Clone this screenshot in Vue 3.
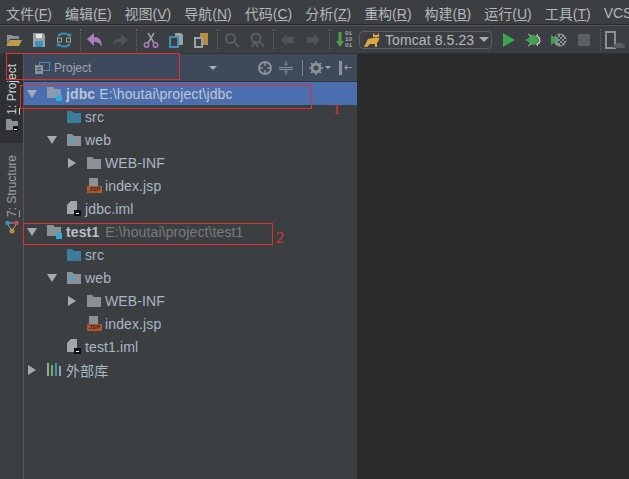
<script setup>
const menus = [['文件','F'],['编辑','E'],['视图','V'],['导航','N'],['代码','C'],['分析','Z'],['重构','R'],['构建','B'],['运行','U'],['工具','T']]
</script>

<template>
  <div class="ide">
    <nav class="menubar">
      <span v-for="m in menus" :key="m[0]" class="menu">{{ m[0] }}(<u>{{ m[1] }}</u>)</span>
      <span class="menu">VCS</span>
    </nav>
    <div class="toolbar">
      <svg viewBox="0 0 16 16"><path d="M1 3h5l1 1h6v3H4l-3 6z" fill="#8a9297"/><path d="M4 8h12l-3 6H0z" fill="#c49a4a"/></svg>
      <svg viewBox="0 0 16 16"><path d="M2 1h10l2 2v12H2z" fill="#9aa2a6"/><rect x="5" y="2" width="6" height="4" fill="#e4e6e7"/><rect x="4" y="9" width="8" height="6" fill="#3d8fbf"/></svg>
      <svg viewBox="0 0 16 16" fill="none"><path d="M2 4a7 5 0 0 1 11-1" stroke="#3f8fb5" stroke-width="2"/><path d="M14 12a7 5 0 0 1-11 1" stroke="#3f8fb5" stroke-width="2"/><path d="m11 4 4 1V1zM5 12l-4-1v4z" fill="#3f8fb5"/><rect x="1.500" y="6" width="4" height="4" stroke="#9aa2a6"/><rect x="10.500" y="6" width="4" height="4" stroke="#9aa2a6"/></svg>
      <i class="sep"></i>
      <svg viewBox="0 0 16 16"><path d="M7 1v4c5 0 8 3 8 10-2-4-4-5-8-5v4L0 7z" fill="#a77fc0"/></svg>
      <svg viewBox="0 0 16 16"><path d="M9 2v4C4 6 1 9 1 14c2-3 4-4 8-4v4l7-6z" fill="#505456"/></svg>
      <i class="sep"></i>
      <svg viewBox="0 0 16 16" fill="none" stroke="#a77fc0" stroke-width="1.500"><circle cx="3.500" cy="13" r="2.200"/><circle cx="12.500" cy="13" r="2.200"/><path d="M5 11 11 1M11 11 5 1" stroke="#9aa2a6"/></svg>
      <svg viewBox="0 0 16 16"><path d="M7 1h6l2 2v10H7z" fill="#9aa2a6"/><rect x="2" y="5" width="8" height="10" fill="#3c3f41" stroke="#3f8fb5" stroke-width="2"/></svg>
      <svg viewBox="0 0 16 16"><rect x="7" y="1" width="8" height="12" fill="#b98d3f"/><rect x="2" y="6" width="7" height="9" fill="#3c3f41" stroke="#9aa2a6" stroke-width="2"/></svg>
      <i class="sep"></i>
      <svg viewBox="0 0 16 16" fill="none" stroke="#5a5e60" stroke-width="2"><circle cx="6.500" cy="6.500" r="4.500"/><path d="m10 10 5 5"/></svg>
      <svg viewBox="0 0 16 16" fill="none" stroke="#5a5e60" stroke-width="2"><circle cx="7" cy="6" r="4.500"/><path d="m11 10 4 5M3 15l3-5 3 5"/></svg>
      <i class="sep"></i>
      <svg viewBox="0 0 16 16"><path d="M7 2v3h7v6H7v3L1 8z" fill="#505456"/></svg>
      <svg viewBox="0 0 16 16"><path d="M9 2v3H2v6h7v3l6-6z" fill="#505456"/></svg>
      <i class="sep"></i>
      <div class="binary">
        <svg width="8" height="15" viewBox="0 0 8 15"><path d="M2.500 0h3v9H8l-4 6-4-6h2.500z" fill="#4ea04e"/></svg>
        <span class="bits">01<br>10<br>01</span>
      </div>
      <div class="runconfig">
        <svg width="16" height="16" viewBox="0 0 16 16"><path d="M0 15 4 7l5-1V1l2 2h2l2-2v7l-2 3v4h-2v-3H6l-3 3z" fill="#d9a83e"/><circle cx="10.500" cy="5.500" r=".8" fill="#333"/><circle cx="13.500" cy="5.500" r=".8" fill="#333"/></svg>
        <span>Tomcat 8.5.23</span>
        <i class="caret"></i>
      </div>
      <svg viewBox="0 0 16 16"><path d="M2 1 14 8 2 15z" fill="#3fa34f"/></svg>
      <svg viewBox="0 0 16 16"><circle cx="7" cy="8" r="5" fill="#3fa34f"/><path d="M11 4c3 1 4 7 0 8" fill="none" stroke="#c0c4c6" stroke-width="1.500"/><path d="M2 2l3 2M2 14l3-2M0 8h2M12 2l-2 2M12 14l-2-2" stroke="#c0c4c6"/></svg>
      <svg viewBox="0 0 16 16"><circle cx="9" cy="8" r="6.500" fill="#8d9193"/><path d="M5 3h2v2H5zM9 3h2v2H9zM7 5h2v2H7zM11 5h2v2h-2zM9 7h2v2H9zM13 7h2v2h-2zM7 9h2v2H7zM11 9h2v2h-2zM9 11h2v2H9z" fill="#3c3f41"/><path d="M0 3l7 5-7 5z" fill="#3fa34f"/></svg>
      <span class="stop"></span>
      <i class="sep"></i>
      <svg class="android" width="24" height="18" viewBox="0 0 24 18"><rect x="1" y="1" width="9" height="16" fill="none" stroke="#8a9297" stroke-width="2"/><path d="M8 17c0-7 12-7 12 0z" fill="#5a5e60"/></svg>
    </div>

    <div class="main">
      <aside class="strip">
        <div class="tab active">
          <span class="vlabel"><u>1</u>: Project</span>
          <svg width="12" height="12" viewBox="0 0 12 12"><path d="M0 0h5l1 2h6v9H0z" fill="#8a9297"/><rect x="7" y="7" width="5" height="5" fill="#111"/><rect x="8" y="10" width="3" height="1" fill="#fff"/></svg>
        </div>
        <div class="tab other">
          <span class="vlabel"><u>7</u>: Structure</span>
          <svg width="14" height="14" viewBox="0 0 14 14"><path d="M2 3 7 11l5-8z" fill="none" stroke="#9aa2a6"/><circle cx="2.500" cy="3" r="2.300" fill="#3d8fbf"/><circle cx="11.500" cy="3" r="2.300" fill="#c05050"/><circle cx="7" cy="11" r="2.500" fill="#b98d3f"/></svg>
        </div>
      </aside>

      <section class="panel">
        <header class="phead">
          <svg class="pico" width="16" height="14" viewBox="0 0 16 14" fill="none"><rect x="5.500" y="1.500" width="10" height="8" stroke="#3f8fb5"/><rect x="1" y="4" width="8" height="9" fill="#8a9297"/><rect x="3" y="6.500" width="4" height="1" fill="#3e4a5c"/><rect x="3" y="9" width="4" height="1" fill="#3e4a5c"/></svg>
          <span class="ptitle">Project</span>
          <i class="caret small"></i>
          <svg class="hicon first" width="14" height="14" viewBox="0 0 14 14"><circle cx="7" cy="7" r="6" fill="none" stroke="#8b9197" stroke-width="2"/><circle cx="7" cy="7" r="2" fill="#3e4a5c"/><path d="M7 2v3M7 9v3M2 7h3M9 7h3" stroke="#8b9197" stroke-width="1.500"/></svg>
          <svg class="hicon" width="14" height="14" viewBox="0 0 14 14" fill="none" stroke="#8b9197"><path d="M0 6.500h14M0 8.500h14M7 0v4M5 2.500l2 2 2-2M7 14v-4M5 11.500l2-2 2 2"/></svg>
          <i class="hsep"></i>
          <svg class="hicon gear" width="14" height="14" viewBox="0 0 14 14"><circle cx="7" cy="7" r="4" fill="none" stroke="#8b9197" stroke-width="3"/><path d="M7 0v3M7 11v3M0 7h3M11 7h3M2 2l2 2M10 10l2 2M12 2l-2 2M2 12l2-2" stroke="#8b9197" stroke-width="1.500"/></svg>
          <i class="caret tiny"></i>
          <svg class="hicon" width="14" height="14" viewBox="0 0 14 14"><rect x="1" y="0" width="3" height="14" fill="#8b9197"/><path d="M6 6h8v1H6zM6 6.500l3-3v6z" fill="#8b9197"/></svg>
        </header>

        <div class="tree">
          <div class="row selected root">
            <i class="arrow down"></i>
            <svg class="module" width="15" height="15" viewBox="0 0 15 15"><path d="M0 1h6l2 2h6v9H0z" fill="#8a9bb0"/><rect x="9" y="9" width="6" height="6" fill="#35a8dc"/></svg>
            <b>jdbc</b><span class="path">E:\houtai\project\jdbc</span>
          </div>
          <div class="row l2"><svg class="folder" width="14" height="12" viewBox="0 0 14 12"><path d="M0 0h5l2 2h7v10H0z" fill="#3d7d9c"/></svg>src</div>
          <div class="row l1"><i class="arrow down"></i><svg class="folder" width="14" height="12" viewBox="0 0 14 12"><path d="M0 0h5l2 2h7v10H0z" fill="#8a9297"/><circle cx="5" cy="6" r="2" fill="#35a8dc"/></svg>web</div>
          <div class="row l3a"><i class="arrow right"></i><svg class="folder" width="14" height="12" viewBox="0 0 14 12"><path d="M0 0h5l2 2h7v10H0z" fill="#8a9297"/></svg>WEB-INF</div>
          <div class="row l3"><span class="jsp"><em></em><small>JSP</small></span>index.jsp</div>
          <div class="row l2"><svg class="iml" width="14" height="15" viewBox="0 0 14 15"><path d="M0 4 4 0h6v13H0z" fill="#a0a8ac"/><rect x="7" y="9" width="7" height="6" fill="#111"/><rect x="9" y="12" width="3" height="1" fill="#fff"/></svg>jdbc.iml</div>
          <div class="row root">
            <i class="arrow down"></i>
            <svg class="module" width="15" height="15" viewBox="0 0 15 15"><path d="M0 1h6l2 2h6v9H0z" fill="#8a9297"/><rect x="9" y="9" width="6" height="6" fill="#35a8dc"/></svg>
            <b>test1</b><span class="path dim">E:\houtai\project\test1</span>
          </div>
          <div class="row l2"><svg class="folder" width="14" height="12" viewBox="0 0 14 12"><path d="M0 0h5l2 2h7v10H0z" fill="#3d7d9c"/></svg>src</div>
          <div class="row l1"><i class="arrow down"></i><svg class="folder" width="14" height="12" viewBox="0 0 14 12"><path d="M0 0h5l2 2h7v10H0z" fill="#8a9297"/><circle cx="5" cy="6" r="2" fill="#35a8dc"/></svg>web</div>
          <div class="row l3a"><i class="arrow right"></i><svg class="folder" width="14" height="12" viewBox="0 0 14 12"><path d="M0 0h5l2 2h7v10H0z" fill="#8a9297"/></svg>WEB-INF</div>
          <div class="row l3"><span class="jsp"><em></em><small>JSP</small></span>index.jsp</div>
          <div class="row l2"><svg class="iml" width="14" height="15" viewBox="0 0 14 15"><path d="M0 4 4 0h6v13H0z" fill="#a0a8ac"/><rect x="7" y="9" width="7" height="6" fill="#111"/><rect x="9" y="12" width="3" height="1" fill="#fff"/></svg>test1.iml</div>
          <div class="row ext">
            <i class="arrow right"></i>
            <svg class="module" width="15" height="13" viewBox="0 0 15 13"><rect x="0" width="2" height="13" fill="#9aa2a6"/><rect x="4" y="2" width="2" height="11" fill="#6fb04f"/><rect x="8" width="2" height="13" fill="#3d8fbf"/><rect x="12" y="3" width="2" height="10" fill="#9aa2a6"/></svg>
            <span class="extname">外部库</span>
          </div>
        </div>
      </section>
      <section class="editor"></section>
    </div>

    <!-- hand-drawn red annotation boxes from the screenshot -->
    <div class="mark m1"></div>
    <div class="mark m2"></div>
    <div class="mark m3"></div>
    <span class="num n1">1</span>
    <span class="num n2">2</span>
  </div>
</template>

<style>
html, body { margin: 0; background: #3c3f41; overflow: hidden; }
</style>

<style scoped>
.ide { position: relative; width: 629px; height: 479px; overflow: hidden; background: #3c3f41; color: #a9b7c6; font-family: "Liberation Sans", "Noto Sans CJK SC", sans-serif; font-size: 14px; }
.menubar { height: 25px; display: flex; align-items: center; gap: 13px; padding: 1px 0 0 6px; box-sizing: border-box; white-space: nowrap; border-bottom: 1px solid #2b2b2b; color: #b4b8ba; font-size: 14px; }
.menu { flex: none; }
.toolbar { height: 29px; box-sizing: border-box; display: flex; align-items: center; gap: 9px; padding-left: 6px; border-top: 1px solid #515658; border-bottom: 1px solid #323232; white-space: nowrap; }
.toolbar > svg { flex: none; width: 16px; height: 16px; }
.toolbar > svg.android { width: 24px; height: 18px; margin-left: -2px; }
.sep { width: 1px; height: 22px; flex: none; border-left: 1px dotted #63676a; box-sizing: border-box; margin: 0 -3px 0 -1px; }
.binary { width: 17px; height: 18px; flex: none; display: flex; align-items: center; gap: 1px; margin-right: -3px; }
.binary svg { flex: none; }
.bits { font: 6px/6px "Liberation Mono", monospace; color: #c0c4c6; }
.runconfig { display: flex; align-items: center; gap: 5px; height: 18px; width: 133px; padding: 0 5px 0 4px; border: 1px solid #5b5f61; border-radius: 4px; flex: none; color: #b4b8ba; box-sizing: border-box; letter-spacing: .1px; }
.runconfig svg { flex: none; }
.caret { width: 0; height: 0; border-left: 5px solid transparent; border-right: 5px solid transparent; border-top: 5px solid #a5abb0; margin-left: auto; flex: none; }
.stop { width: 12px; height: 12px; margin: 0 2px; background: #5e6163; flex: none; }
.main { display: flex; height: 425px; }
.strip { width: 23px; flex: none; background: #3c3f41; border-right: 1px solid #55585a; display: flex; flex-direction: column; }
.tab { display: flex; flex-direction: column; align-items: center; gap: 4px; padding-left: 1px; color: #9aa2a6; font-size: 12px; }
.tab.active { background: #2e3032; color: #d0d2d4; height: 89px; box-sizing: border-box; padding-top: 10px; }
.tab.other { padding-top: 12px; gap: 3px; }
.vlabel { writing-mode: vertical-rl; transform: rotate(180deg); white-space: nowrap; }
.panel { width: 334px; flex: none; background: #3c3f41; display: flex; flex-direction: column; border-right: 1px solid #2d2d2d; box-sizing: border-box; }
.phead { height: 28px; flex: none; background: #3e4a5c; display: flex; align-items: center; padding-left: 10px; box-sizing: border-box; border-bottom: 1px solid #33363a; }
.pico { flex: none; }
.ptitle { margin-left: 4px; color: #9ea6ad; font-size: 12px; width: 155px; flex: none; }
.caret.small { margin: 0; flex: none; border-width: 4px 4px 0; }
.hicon { flex: none; margin-left: 7px; }
.hicon.first { margin-left: 41px; }
.hsep { width: 1px; height: 16px; background: #7c8288; margin-left: 9px; flex: none; }
.hicon.gear { margin-left: 6px; }
.caret.tiny { border-width: 3px 3px 0; margin: 0 0 0 2px; flex: none; }
.tree { flex: 1; font-size: 14px; color: #a9b7c6; letter-spacing: .12px; }
.row { height: 23px; display: flex; align-items: center; white-space: nowrap; box-sizing: border-box; }
.row.root { padding-left: 3px; }
.row.selected { background: #4b6eaf; color: #c9d0d8; }
.row b { margin-left: 4px; font-weight: 700; color: #b9bfc4; }
.row.selected b { color: #bbc5d2; }
.path { margin-left: 4px; color: #c0c8d0; }
.path.dim { color: #787c7e; margin-left: 6px; }
.arrow { width: 0; height: 0; flex: none; display: block; }
.arrow.down { border-left: 5px solid transparent; border-right: 5px solid transparent; border-top: 8px solid #a5abb0; margin-right: 10px; }
.arrow.right { border-top: 5px solid transparent; border-bottom: 5px solid transparent; border-left: 8px solid #a5abb0; margin-right: 11px; }
.module { flex: none; }
.l1 { padding-left: 23px; }
.l2 { padding-left: 43px; }
.l3a { padding-left: 44px; }
.l3 { padding-left: 63px; }
.ext { padding-left: 4px; }
.extname { margin-left: 4px; }
.folder, .iml { flex: none; margin-right: 4px; }
.jsp { position: relative; width: 15px; height: 15px; flex: none; margin-right: 3px; display: block; }
.jsp em { position: absolute; left: 2px; top: 0; width: 9px; height: 8px; background: #8a9297; }
.jsp small { position: absolute; left: 0; bottom: 0; width: 15px; height: 7px; background: #b0562a; color: #2b2b2b; font: 700 6px/7px "Liberation Sans", sans-serif; text-align: center; }
.editor { flex: 1; background: #2b2b2b; }
.mark { position: absolute; border: 1px solid #e03030; box-sizing: border-box; pointer-events: none; }
.m1 { left: 6px; top: 53px; width: 174px; height: 27px; }
.m2 { left: 20px; top: 85px; width: 292px; height: 24px; }
.m3 { left: 23px; top: 223px; width: 250px; height: 22px; }
.num { position: absolute; color: #e03030; font: 14px "Liberation Serif", serif; }
.n1 { left: 333px; top: 102px; }
.n2 { left: 276px; top: 229px; font-size: 16px; }
</style>
